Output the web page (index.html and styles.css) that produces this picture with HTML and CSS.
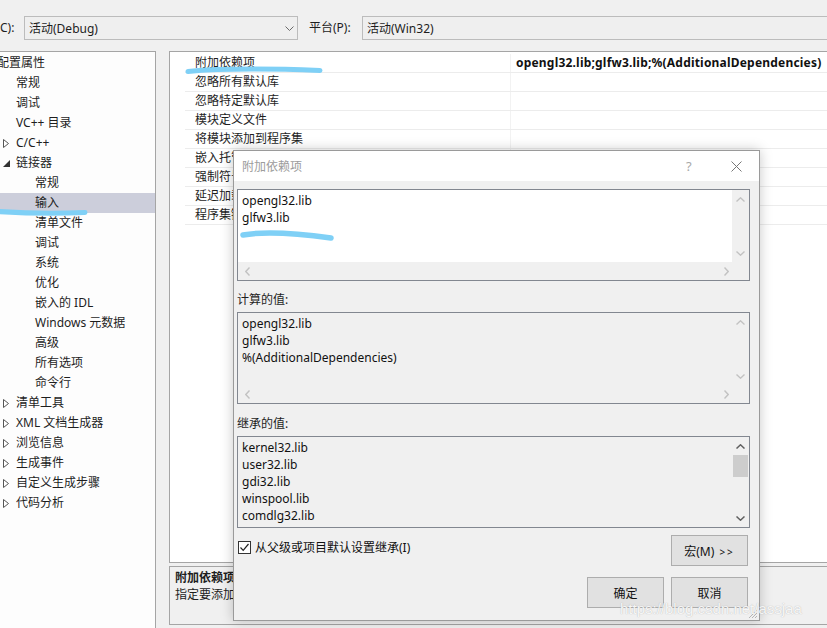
FILE: index.html
```html
<!DOCTYPE html>
<html>
<head>
<meta charset="utf-8">
<link rel="stylesheet" href="styles.css">
</head>
<body>
<div class="top">
  <span class="lbl lbl-c">C):</span>
  <div class="combo combo-cfg"><span>活动(Debug)</span><svg class="chev" width="9" height="5" viewBox="0 0 9 5"><polyline points="0.5,0.5 4.5,4.5 8.5,0.5" fill="none" stroke="#6a6a6a" stroke-width="1"/></svg></div>
  <span class="lbl lbl-p">平台(P):</span>
  <div class="combo combo-plat"><span>活动(Win32)</span></div>
</div>

<div class="main">
  <div class="tree">
    <div class="node l0">配置属性</div>
    <div class="node l1">常规</div>
    <div class="node l1">调试</div>
    <div class="node l1">VC++ 目录</div>
    <div class="node l1"><span class="tw"><svg width="6" height="9" viewBox="0 0 6 9"><polygon points="0.5,0.5 5.5,4.5 0.5,8.5" fill="#fff" stroke="#555" stroke-width="1"/></svg></span>C/C++</div>
    <div class="node l1"><span class="tw"><svg width="7" height="7" viewBox="0 0 7 7"><polygon points="7,0 7,7 0,7" fill="#333"/></svg></span>链接器</div>
    <div class="node l2">常规</div>
    <div class="node l2 sel">输入</div>
    <div class="node l2">清单文件</div>
    <div class="node l2">调试</div>
    <div class="node l2">系统</div>
    <div class="node l2">优化</div>
    <div class="node l2">嵌入的 IDL</div>
    <div class="node l2">Windows 元数据</div>
    <div class="node l2">高级</div>
    <div class="node l2">所有选项</div>
    <div class="node l2">命令行</div>
    <div class="node l1"><span class="tw"><svg width="6" height="9" viewBox="0 0 6 9"><polygon points="0.5,0.5 5.5,4.5 0.5,8.5" fill="#fff" stroke="#555" stroke-width="1"/></svg></span>清单工具</div>
    <div class="node l1"><span class="tw"><svg width="6" height="9" viewBox="0 0 6 9"><polygon points="0.5,0.5 5.5,4.5 0.5,8.5" fill="#fff" stroke="#555" stroke-width="1"/></svg></span>XML 文档生成器</div>
    <div class="node l1"><span class="tw"><svg width="6" height="9" viewBox="0 0 6 9"><polygon points="0.5,0.5 5.5,4.5 0.5,8.5" fill="#fff" stroke="#555" stroke-width="1"/></svg></span>浏览信息</div>
    <div class="node l1"><span class="tw"><svg width="6" height="9" viewBox="0 0 6 9"><polygon points="0.5,0.5 5.5,4.5 0.5,8.5" fill="#fff" stroke="#555" stroke-width="1"/></svg></span>生成事件</div>
    <div class="node l1"><span class="tw"><svg width="6" height="9" viewBox="0 0 6 9"><polygon points="0.5,0.5 5.5,4.5 0.5,8.5" fill="#fff" stroke="#555" stroke-width="1"/></svg></span>自定义生成步骤</div>
    <div class="node l1"><span class="tw"><svg width="6" height="9" viewBox="0 0 6 9"><polygon points="0.5,0.5 5.5,4.5 0.5,8.5" fill="#fff" stroke="#555" stroke-width="1"/></svg></span>代码分析</div>
  </div>

  <div class="right">
    <div class="grid">
      <div class="row"><div class="name">附加依赖项</div><div class="val">opengl32.lib;glfw3.lib;%(AdditionalDependencies)</div></div>
      <div class="row"><div class="name">忽略所有默认库</div><div class="val"></div></div>
      <div class="row"><div class="name">忽略特定默认库</div><div class="val"></div></div>
      <div class="row"><div class="name">模块定义文件</div><div class="val"></div></div>
      <div class="row"><div class="name">将模块添加到程序集</div><div class="val"></div></div>
      <div class="row"><div class="name">嵌入托管资源文件</div><div class="val"></div></div>
      <div class="row"><div class="name">强制符号引用</div><div class="val"></div></div>
      <div class="row"><div class="name">延迟加载的 DLL</div><div class="val"></div></div>
      <div class="row"><div class="name">程序集链接资源</div><div class="val"></div></div>
    </div>
    <div class="desc">
      <div class="desc-title">附加依赖项</div>
      <div>指定要添加到链接命令行的附加项。[例如 kernel32.lib]</div>
    </div>
  </div>
</div>

<div class="dialog">
  <div class="dlg-title">
    <span>附加依赖项</span>
    <span class="q">?</span>
    <svg class="x" width="11" height="11" viewBox="0 0 11 11"><path d="M0.5 0.5 L10.5 10.5 M10.5 0.5 L0.5 10.5" stroke="#777" stroke-width="1" fill="none"/></svg>
  </div>
  <div class="dlg-body">
    <div class="tb">
      <div class="tb-main">
        <div class="tb-text"><div>opengl32.lib</div><div>glfw3.lib</div></div>
        <div class="vs">
          <svg width="9" height="5" viewBox="0 0 9 5"><polyline points="0.5,4.5 4.5,0.8 8.5,4.5" fill="none" stroke="#c2c2c2" stroke-width="1.4"/></svg>
          <svg width="9" height="5" viewBox="0 0 9 5"><polyline points="0.5,0.5 4.5,4.2 8.5,0.5" fill="none" stroke="#c2c2c2" stroke-width="1.4"/></svg>
        </div>
      </div>
      <div class="hs">
        <svg width="5" height="9" viewBox="0 0 5 9"><polyline points="4.5,0.5 0.8,4.5 4.5,8.5" fill="none" stroke="#c2c2c2" stroke-width="1.4"/></svg>
        <svg width="5" height="9" viewBox="0 0 5 9"><polyline points="0.5,0.5 4.2,4.5 0.5,8.5" fill="none" stroke="#c2c2c2" stroke-width="1.4"/></svg>
      </div>
    </div>
    <div class="lab lab1">计算的值:</div>
    <div class="tb dis">
      <div class="tb-main">
        <div class="tb-text"><div>opengl32.lib</div><div>glfw3.lib</div><div>%(AdditionalDependencies)</div></div>
        <div class="vs">
          <svg width="9" height="5" viewBox="0 0 9 5"><polyline points="0.5,4.5 4.5,0.8 8.5,4.5" fill="none" stroke="#c2c2c2" stroke-width="1.4"/></svg>
          <svg width="9" height="5" viewBox="0 0 9 5"><polyline points="0.5,0.5 4.5,4.2 8.5,0.5" fill="none" stroke="#c2c2c2" stroke-width="1.4"/></svg>
        </div>
      </div>
      <div class="hs">
        <svg width="5" height="9" viewBox="0 0 5 9"><polyline points="4.5,0.5 0.8,4.5 4.5,8.5" fill="none" stroke="#c2c2c2" stroke-width="1.4"/></svg>
        <svg width="5" height="9" viewBox="0 0 5 9"><polyline points="0.5,0.5 4.2,4.5 0.5,8.5" fill="none" stroke="#c2c2c2" stroke-width="1.4"/></svg>
      </div>
    </div>
    <div class="lab lab2">继承的值:</div>
    <div class="tb dis">
      <div class="tb-main">
        <div class="tb-text"><div>kernel32.lib</div><div>user32.lib</div><div>gdi32.lib</div><div>winspool.lib</div><div>comdlg32.lib</div></div>
        <div class="vs vs3">
          <span class="arr"><svg width="9" height="5" viewBox="0 0 9 5"><polyline points="0.5,4.5 4.5,0.8 8.5,4.5" fill="none" stroke="#606060" stroke-width="1.5"/></svg></span>
          <span class="thumb"></span>
          <span class="arr down"><svg width="9" height="5" viewBox="0 0 9 5"><polyline points="0.5,0.5 4.5,4.2 8.5,0.5" fill="none" stroke="#606060" stroke-width="1.5"/></svg></span>
        </div>
      </div>
    </div>
    <div class="dlg-foot">
      <label class="chk">
        <span class="box"><svg width="11" height="11" viewBox="0 0 11 11"><polyline points="1.5,5.5 4.2,8.3 9.5,2" fill="none" stroke="#222" stroke-width="1.2"/></svg></span>
        <span>从父级或项目默认设置继承(I)</span>
      </label>
      <div class="btns">
        <span></span>
        <button class="btn">宏(M) <span class="gg">&gt;&gt;</span></button>
        <button class="btn">确定</button>
        <button class="btn">取消</button>
      </div>
    </div>
  </div>
  <svg class="grip" width="10" height="10" viewBox="0 0 10 10"><path d="M9 1 L1 9 M9 4 L4 9 M9 7 L7 9" stroke="#b5b5b5" stroke-width="1" fill="none"/></svg>
</div>

<div class="watermark">https://blog.csdn.net/assjaa</div>

<svg class="marks" width="827" height="628" viewBox="0 0 827 628">
  <path d="M188 71.5 C 220 68.5, 280 69, 320 70.5" fill="none" stroke="#7fd0f6" stroke-width="5" stroke-linecap="round"/>
  <path d="M-2 211.5 C 30 213.5, 60 213.5, 85 212.5" fill="none" stroke="#7fd0f6" stroke-width="5" stroke-linecap="round"/>
  <path d="M243 235 C 262 231.5, 295 233, 331 238" fill="none" stroke="#7fd0f6" stroke-width="5.5" stroke-linecap="round"/>
</svg>
</body>
</html>
```

FILE: styles.css
```css
* { box-sizing: border-box; }
html, body { margin: 0; }
body {
  position: relative;
  width: 827px;
  height: 628px;
  overflow: hidden;
  background: #f0f0f0;
  font-family: "Noto Sans", "Noto Sans CJK SC", sans-serif;
  font-size: 12px;
  color: #1e1e1e;
}

/* top bar */
.top {
  display: flex;
  align-items: flex-start;
  height: 51px;
  padding-top: 16px;
}
.lbl { line-height: 24px; white-space: nowrap; }
.lbl-c { width: 24px; }
.lbl-p { width: 64px; padding-left: 11px; }
.combo {
  height: 24px;
  border: 1px solid #bcbcbc;
  background: #efefef;
  display: flex;
  align-items: center;
  padding-left: 4px;
  white-space: nowrap;
}
.combo-cfg { width: 274px; justify-content: space-between; padding-right: 3px; }
.combo-plat { flex: 1; margin-right: -4px; }

/* main */
.main { display: flex; height: 577px; }
.tree {
  width: 166px;
  margin-left: -10px;
  height: 600px;
  background: #fdfdfd;
  border: 1px solid #a5a5a5;
  border-bottom: none;
  padding-top: 1px;
}
.node {
  height: 20px;
  line-height: 20px;
  display: flex;
  align-items: center;
  white-space: nowrap;
}
.l0 { padding-left: 6px; }
.l1 { padding-left: 25px; }
.l2 { padding-left: 44px; }
.tw { width: 13px; margin-left: -13px; display: flex; align-items: center; }
.sel { background: #cccedb; }

.right {
  flex: 1;
  margin-left: 13px;
  margin-right: -2px;
  display: flex;
  flex-direction: column;
}
.grid {
  height: 512px;
  background: #fff;
  border: 1px solid #a5a5a5;
  padding-top: 2px;
}
.row {
  display: flex;
  height: 19px;
  margin-left: 15px;
  border-bottom: 1px solid #ececec;
  line-height: 18px;
  white-space: nowrap;
}
.name { width: 326px; padding-left: 10px; border-right: 1px solid #f2f2f2; overflow: hidden; }
.val { padding-left: 5px; font-weight: bold; color: #111; letter-spacing: 0.2px; }

.desc {
  height: 59px;
  margin-top: 3px;
  border: 1px solid #a5a5a5;
  background: #f0f0f0;
  padding: 2px 5px;
  line-height: 17px;
  white-space: nowrap;
  overflow: hidden;
}
.desc-title { font-weight: bold; }

/* dialog */
.dialog {
  position: absolute;
  left: 233px;
  top: 150px;
  width: 527px;
  height: 471px;
  border: 1px solid #9a9a9a;
  background: #f0f0f0;
  box-shadow: 0 0 12px rgba(0, 0, 0, 0.22);
  display: flex;
  flex-direction: column;
  z-index: 5;
}
.dlg-title {
  height: 30px;
  flex: none;
  background: #fff;
  display: flex;
  align-items: center;
  padding-left: 8px;
  color: #9c9c9c;
}
.q { margin-left: auto; width: 12px; font-size: 13px; color: #a8a8a8; margin-right: 33px; }
.x { margin-right: 17px; }
.dlg-body {
  flex: 1;
  padding: 8px 9px 0 3px;
  display: flex;
  flex-direction: column;
}
.tb {
  height: 92px;
  flex: none;
  border: 1px solid #828790;
  display: flex;
  flex-direction: column;
}
.tb-main { flex: 1; display: flex; min-height: 0; }
.tb-text {
  flex: 1;
  padding: 2px 4px;
  line-height: 17px;
  background: #fff;
  color: #111;
  white-space: nowrap;
}
.tb.dis .tb-text { background: #f0f0f0; }
.vs {
  width: 17px;
  background: #f0f0f0;
  display: flex;
  flex-direction: column;
  justify-content: space-between;
  align-items: center;
  padding: 7px 0 6px;
}
.hs {
  height: 18px;
  flex: none;
  background: #f0f0f0;
  display: flex;
  justify-content: space-between;
  align-items: center;
  padding: 0 20px 0 7px;
}
.vs3 { padding: 0; justify-content: flex-start; }
.arr { height: 18px; display: flex; align-items: center; justify-content: center; width: 100%; }
.arr.down { margin-top: auto; }
.thumb { width: 15px; height: 22px; background: #cdcdcd; }

.lab { line-height: 17px; flex: none; }
.lab1 { height: 31px; padding-top: 10px; }
.lab2 { height: 32px; padding-top: 11px; }

.dlg-foot { flex: 1; display: flex; justify-content: space-between; }
.chk {
  margin-top: 12px;
  margin-left: 1px;
  height: 14px;
  display: flex;
  align-items: center;
  gap: 4px;
  white-space: nowrap;
  color: #111;
}
.box {
  width: 13px;
  height: 13px;
  border: 1px solid #333;
  background: #fff;
  display: flex;
  align-items: center;
  justify-content: center;
}
.btns {
  display: grid;
  grid-template-columns: 77px 77px;
  grid-auto-rows: 31px;
  column-gap: 7px;
  row-gap: 11px;
  padding-top: 7px;
  margin-right: 2px;
}
.btn {
  height: 31px;
  border: 1px solid #adadad;
  background: #e1e1e1;
  font-family: "Noto Sans", "Noto Sans CJK SC", sans-serif;
  font-size: 12px;
  color: #111;
  padding: 0;
}
.gg { font-size: 10px; letter-spacing: 2px; margin-left: 2px; }
.grip { position: absolute; right: 1px; bottom: 1px; }

.watermark {
  position: absolute;
  left: 620px;
  top: 600px;
  z-index: 6;
  font-family: "Liberation Sans", sans-serif;
  font-size: 15px;
  color: rgba(255, 255, 255, 0.9);
  text-shadow: 0 0 1px rgba(140, 140, 140, 0.7);
  white-space: nowrap;
}
.marks { position: absolute; left: 0; top: 0; z-index: 10; pointer-events: none; }
```
